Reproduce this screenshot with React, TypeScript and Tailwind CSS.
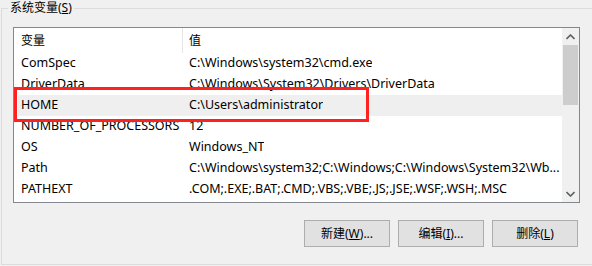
import React from "react";

const rows: [string, string][] = [
  ["ComSpec", "C:\\Windows\\system32\\cmd.exe"],
  ["DriverData", "C:\\Windows\\System32\\Drivers\\DriverData"],
  ["HOME", "C:\\Users\\administrator"],
  ["NUMBER_OF_PROCESSORS", "12"],
  ["OS", "Windows_NT"],
  ["Path", "C:\\Windows\\system32;C:\\Windows;C:\\Windows\\System32\\Wb..."],
  ["PATHEXT", ".COM;.EXE;.BAT;.CMD;.VBS;.VBE;.JS;.JSE;.WSF;.WSH;.MSC"],
];

function Btn({ label, hot, rest }: { label: string; hot: string; rest: string }) {
  return (
    <button className="w-[86px] h-[27px] bg-[#e1e1e1] border border-[#adadad] text-[12px] text-black leading-none">
      {label}(<span className="underline">{hot}</span>){rest}
    </button>
  );
}

export default function App() {
  return (
    <div className="relative w-[592px] h-[266px] overflow-hidden bg-[#f0f0f0] font-['Noto_Sans','Noto_Sans_CJK_SC',sans-serif] text-[12px] text-black">
      <div className="relative ml-[1px] mt-[8px] w-[620px] h-[257px] border border-[#dcdcdc]">
        <div className="absolute left-[6px] top-[-10px] px-[2px] bg-[#f0f0f0] leading-[18px]">
          系统变量(<span className="underline">S</span>)
        </div>

        <div className="ml-[11px] mt-[18px] w-[567px] h-[176px] border border-[#828790] bg-white flex">
          <div className="flex-1 min-w-0">
            <div className="flex h-[25px] items-center">
              <div className="w-[168px] pl-[7px]">变量</div>
              <div className="w-px h-[25px] bg-[#e5e5e5]" />
              <div className="pl-[6px]">值</div>
            </div>
            {rows.map(([k, v]) => (
              <div
                key={k}
                className={`flex h-[21px] items-center ml-[4px] text-[12.5px] ${k === "HOME" ? "bg-[#efefef]" : ""}`}
              >
                <div className="w-[164px] shrink-0 pl-[3px] whitespace-nowrap overflow-visible">{k}</div>
                <div className="pl-[7px] whitespace-nowrap overflow-hidden">{v}</div>
              </div>
            ))}
          </div>

          <div className="w-[17px] bg-[#f0f0f0] flex flex-col items-center">
            <div className="h-[17px] flex items-center justify-center">
              <svg width="9" height="6" viewBox="0 0 9 6">
                <path d="M0.5 5 L4.5 1 L8.5 5" stroke="#606060" strokeWidth="1.6" fill="none" />
              </svg>
            </div>
            <div className="w-[15px] h-[60px] bg-[#cdcdcd]" />
            <div className="flex-1" />
            <div className="h-[17px] flex items-center justify-center">
              <svg width="9" height="6" viewBox="0 0 9 6">
                <path d="M0.5 1 L4.5 5 L8.5 1" stroke="#606060" strokeWidth="1.6" fill="none" />
              </svg>
            </div>
          </div>
        </div>

        <div className="flex gap-[8px] ml-[302px] mt-[17px]">
          <Btn label="新建" hot="W" rest="..." />
          <Btn label="编辑" hot="I" rest="..." />
          <Btn label="删除" hot="L" rest="" />
        </div>
      </div>

      <div className="absolute left-[14px] top-[87px] w-[355px] h-[35px] border-[3px] border-[#ff2020]" />
    </div>
  );
}
